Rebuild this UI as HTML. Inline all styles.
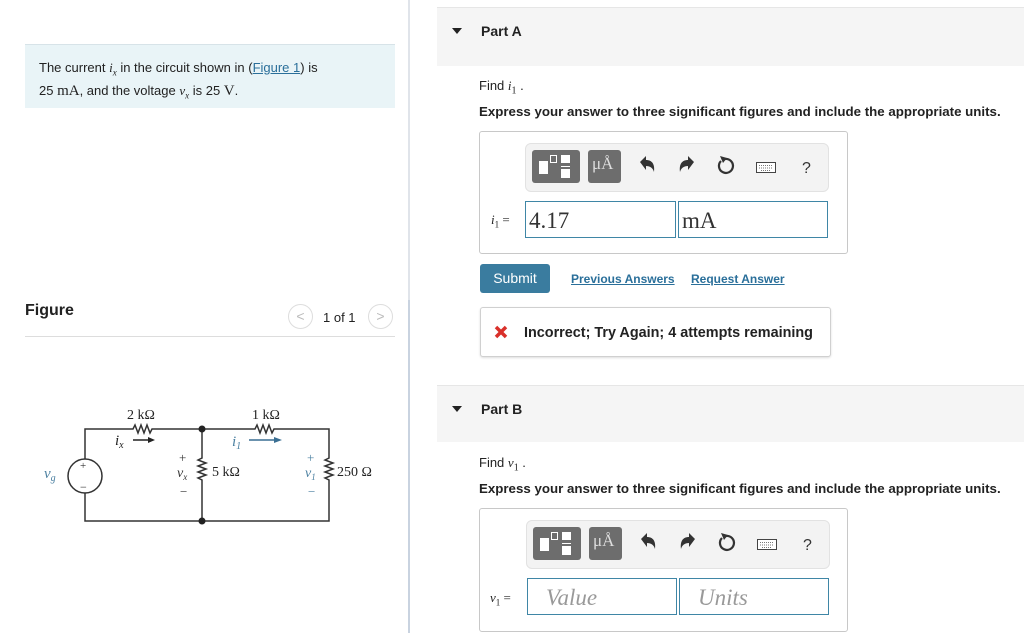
<!DOCTYPE html>
<html><head><meta charset="utf-8"><style>
body{margin:0;width:1024px;height:633px;background:#fff;font-family:"Liberation Sans",sans-serif;color:#222;position:relative;overflow:hidden}
.a{position:absolute}
.ser{font-family:"Liberation Serif",serif}
.hdr{position:absolute;left:437px;right:0;background:#f5f5f5;border-top:1px solid #e6e6e6}
.tri{position:absolute;left:452px;width:0;height:0;border-left:5px solid transparent;border-right:5px solid transparent;border-top:6px solid #222}
.box{position:absolute;border:1px solid #c8c8c8;border-radius:3px;background:#fff}
.tb{position:absolute;background:#f3f3f3;border:1px solid #e2e2e2;border-radius:6px;height:47px;width:302px}
.btn{position:absolute;top:7px;height:33px;background:#6d6d6d;border-radius:3px}
.inp{position:absolute;height:37px;border:1px solid #3f86a6;background:#fff;font-family:"Liberation Serif",serif;font-size:23px;line-height:37px;padding-left:3px;box-sizing:border-box;color:#333}
.ex{font-size:13.3px;font-weight:bold}
</style></head><body>
<div class="a" style="left:408px;top:0;width:2px;height:633px;background:#e0e4ea"></div>
<div class="a" style="left:408px;top:300px;width:2px;height:333px;background:#c9d3e0"></div>

<div class="a" style="left:25px;top:44px;width:370px;height:63px;background:#e9f4f7;border-top:1px solid #d7e3e8"></div>
<div class="a" style="left:39px;top:59px;font-size:13px;line-height:18px;color:#222">The current <i class="ser">i<sub style="font-size:9px">x</sub></i> in the circuit shown in (<span style="color:#2a6f9a;text-decoration:underline">Figure 1</span>) is<br>25 <span class="ser" style="font-size:15px">mA</span>, and the voltage <i class="ser">v<sub style="font-size:9px">x</sub></i> is 25 <span class="ser" style="font-size:15px">V</span>.</div>

<div class="a" style="left:25px;top:302px;font-size:16px;font-weight:bold">Figure</div>
<div class="a" style="left:25px;top:336px;width:370px;height:1px;background:#ddd"></div>
<div class="a" style="left:288px;top:304px;width:23px;height:23px;border:1px solid #ddd;border-radius:50%;color:#bbb;text-align:center;line-height:22px;font-size:14px">&lt;</div>
<div class="a" style="left:323px;top:310px;font-size:13px">1 of 1</div>
<div class="a" style="left:368px;top:304px;width:23px;height:23px;border:1px solid #ddd;border-radius:50%;color:#bbb;text-align:center;line-height:22px;font-size:14px">&gt;</div>

<svg class="a" style="left:0;top:390px" width="400" height="150" viewBox="0 390 400 150" font-family="Liberation Serif">
<g stroke="#333" stroke-width="1.5" fill="none">
<path d="M85 459 V429 H133 l2 -4 l3 8 l3 -8 l3 8 l3 -8 l3 8 l2 -4 H255 l2 -4 l3 8 l3 -8 l3 8 l3 -8 l3 8 l2 -4 H329 V458 l-4 2 l8 3 l-8 3 l8 3 l-8 3 l8 3 l-8 3 l4 2 V521 H85 V493"/>
<path d="M202 429 V458 l-4 2 l8 3 l-8 3 l8 3 l-8 3 l8 3 l-8 3 l4 2 V521"/>
<circle cx="85" cy="476" r="17"/>
</g>
<circle cx="202" cy="429" r="3.5" fill="#222"/><circle cx="202" cy="521" r="3.5" fill="#222"/>
<text x="80" y="469" font-size="11" fill="#333">+</text><text x="80" y="491" font-size="12" fill="#333">−</text>
<text x="127" y="419" font-size="14" fill="#222">2 kΩ</text>
<text x="252" y="419" font-size="14" fill="#222">1 kΩ</text>
<text x="212" y="476" font-size="14" fill="#222">5 kΩ</text>
<text x="337" y="476" font-size="14" fill="#222">250 Ω</text>
<text x="44" y="478" font-size="15" font-style="italic" fill="#4a7fa0">v<tspan font-size="10" dy="3">g</tspan></text>
<text x="115" y="445" font-size="15" font-style="italic" fill="#222">i<tspan font-size="10" dy="3">x</tspan></text>
<path d="M133 440 H150" stroke="#222" stroke-width="1.5"/><path d="M155 440 l-7 -3 v6z" fill="#222"/>
<text x="232" y="446" font-size="15" font-style="italic" fill="#4a7fa0">i<tspan font-size="10" dy="3">1</tspan></text>
<path d="M249 440 H275" stroke="#3a6f93" stroke-width="1.5"/><path d="M282 440 l-8 -3 v6z" fill="#3a6f93"/>
<text x="179" y="462" font-size="13" fill="#333">+</text>
<text x="177" y="477" font-size="14" font-style="italic" fill="#333">v<tspan font-size="9" dy="3">x</tspan></text>
<text x="180" y="496" font-size="13" fill="#333">−</text>
<text x="307" y="462" font-size="13" fill="#4a7fa0">+</text>
<text x="305" y="477" font-size="14" font-style="italic" fill="#4a7fa0">v<tspan font-size="9" dy="3">1</tspan></text>
<text x="308" y="496" font-size="13" fill="#4a7fa0">−</text>
</svg>

<!-- Part A -->
<div class="hdr" style="top:7px;height:58px"></div>
<div class="tri" style="top:28px"></div>
<div class="a" style="left:481px;top:23px;font-size:14px;font-weight:bold">Part A</div>
<div class="a" style="left:479px;top:78px;font-size:13px">Find <i class="ser">i</i><sub class="ser" style="font-size:10px">1</sub> .</div>
<div class="a ex" style="left:479px;top:104px">Express your answer to three significant figures and include the appropriate units.</div>

<div class="box" style="left:479px;top:131px;width:367px;height:121px"></div>
<div class="tb" style="left:525px;top:143px"></div>
<div class="btn" style="left:532px;top:150px;width:48px"></div>
<div class="a" style="left:539px;top:161px;width:9px;height:13px;background:#fff"></div>
<div class="a" style="left:550px;top:155px;width:5px;height:6px;border:1px solid #fff"></div>
<div class="a" style="left:561px;top:155px;width:9px;height:8px;background:#fff"></div>
<div class="a" style="left:561px;top:166px;width:9px;height:1px;background:#fff"></div>
<div class="a" style="left:561px;top:169px;width:9px;height:9px;background:#fff"></div>
<div class="btn" style="left:588px;top:150px;width:33px"></div>
<div class="a ser" style="left:592px;top:154px;color:#ddd;font-size:17px">μÅ</div>
<svg class="a" style="left:630px;top:150px" width="200" height="35">
<path d="M10 12 l6 -6 v4 c6 0 9 4 8 12 c-1 -4 -4 -6 -8 -6 v4z" fill="#333"/>
<path d="M64 12 l-6 -6 v4 c-6 0 -9 4 -8 12 c1 -4 4 -6 8 -6 v4z" fill="#333"/>
<path d="M91 11 a7 7 0 1 0 4 -2" stroke="#333" stroke-width="2.2" fill="none"/>
<path d="M90 6 l7 2 l-4 5z" fill="#333"/>
<rect x="126.5" y="12.5" width="19" height="10" fill="#fff" stroke="#444"/>
<path d="M129 15.5 h14 M129 18 h14 M131 20.5 h10" stroke="#777" stroke-dasharray="1 1"/>
<text x="172" y="23" font-size="16" fill="#333" font-family="Liberation Sans">?</text>
</svg>
<div class="a ser" style="left:491px;top:212px;font-size:13px"><i>i</i><sub style="font-size:9px">1</sub> =</div>
<div class="inp" style="left:525px;top:201px;width:151px">4.17</div>
<div class="inp" style="left:678px;top:201px;width:150px">mA</div>

<div class="a" style="left:480px;top:264px;width:70px;height:29px;background:#3a7c9f;border-radius:3px;color:#fff;font-size:14px;text-align:center;line-height:29px">Submit</div>
<div class="a" style="left:571px;top:272px;font-size:12px;font-weight:bold;color:#2a6f9a;text-decoration:underline">Previous Answers</div>
<div class="a" style="left:691px;top:272px;font-size:12px;font-weight:bold;color:#2a6f9a;text-decoration:underline">Request Answer</div>

<div class="box" style="left:480px;top:307px;width:349px;height:48px;border-color:#d0d0d0;box-shadow:0 1px 2px #ddd"></div>
<svg class="a" style="left:494px;top:325px" width="14" height="14"><path d="M2 2 L12 12 M12 2 L2 12" stroke="#d9302a" stroke-width="3.5"/></svg>
<div class="a" style="left:524px;top:325px;font-size:14.4px;font-weight:bold">Incorrect; Try Again; 4 attempts remaining</div>

<!-- Part B -->
<div class="hdr" style="top:385px;height:56px"></div>
<div class="tri" style="top:406px"></div>
<div class="a" style="left:481px;top:401px;font-size:14px;font-weight:bold">Part B</div>
<div class="a" style="left:479px;top:455px;font-size:13px">Find <i class="ser">v</i><sub class="ser" style="font-size:10px">1</sub> .</div>
<div class="a ex" style="left:479px;top:481px">Express your answer to three significant figures and include the appropriate units.</div>

<div class="box" style="left:479px;top:508px;width:367px;height:122px"></div>
<div class="tb" style="left:526px;top:520px"></div>
<div class="btn" style="left:533px;top:527px;width:48px"></div>
<div class="a" style="left:540px;top:538px;width:9px;height:13px;background:#fff"></div>
<div class="a" style="left:551px;top:532px;width:5px;height:6px;border:1px solid #fff"></div>
<div class="a" style="left:562px;top:532px;width:9px;height:8px;background:#fff"></div>
<div class="a" style="left:562px;top:543px;width:9px;height:1px;background:#fff"></div>
<div class="a" style="left:562px;top:546px;width:9px;height:9px;background:#fff"></div>
<div class="btn" style="left:589px;top:527px;width:33px"></div>
<div class="a ser" style="left:593px;top:531px;color:#ddd;font-size:17px">μÅ</div>
<svg class="a" style="left:631px;top:527px" width="200" height="35">
<path d="M10 12 l6 -6 v4 c6 0 9 4 8 12 c-1 -4 -4 -6 -8 -6 v4z" fill="#333"/>
<path d="M64 12 l-6 -6 v4 c-6 0 -9 4 -8 12 c1 -4 4 -6 8 -6 v4z" fill="#333"/>
<path d="M91 11 a7 7 0 1 0 4 -2" stroke="#333" stroke-width="2.2" fill="none"/>
<path d="M90 6 l7 2 l-4 5z" fill="#333"/>
<rect x="126.5" y="12.5" width="19" height="10" fill="#fff" stroke="#444"/>
<path d="M129 15.5 h14 M129 18 h14 M131 20.5 h10" stroke="#777" stroke-dasharray="1 1"/>
<text x="172" y="23" font-size="16" fill="#333" font-family="Liberation Sans">?</text>
</svg>
<div class="a ser" style="left:490px;top:590px;font-size:13px"><i>v</i><sub style="font-size:9px">1</sub> =</div>
<div class="inp" style="left:527px;top:578px;width:150px;color:#999;font-style:italic;padding-left:18px">Value</div>
<div class="inp" style="left:679px;top:578px;width:150px;color:#999;font-style:italic;padding-left:18px">Units</div>
</body></html>
